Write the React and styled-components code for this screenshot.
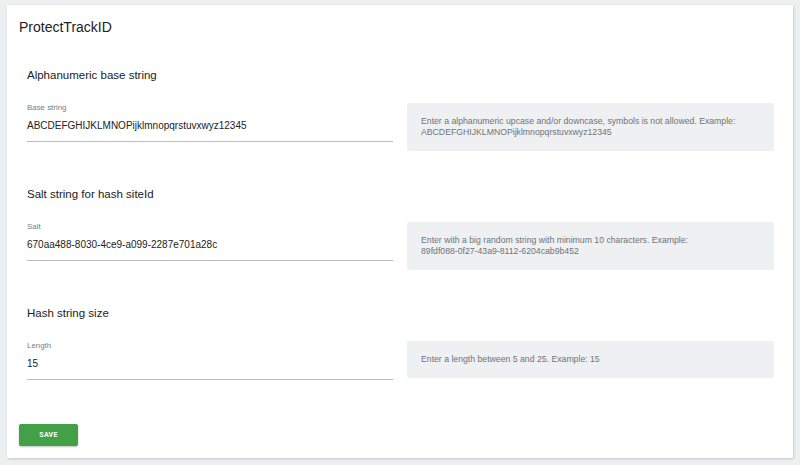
import React from "react";
import styled, { createGlobalStyle } from "styled-components";

const Global = createGlobalStyle`
  html, body { margin: 0; padding: 0; background: #eeeff1; }
  body { font-family: "Liberation Sans", Arial, sans-serif; }
  * { box-sizing: border-box; }
`;

const Page = styled.div`
  padding: 5px 7px 7px 7px;
`;

const Card = styled.div`
  width: 786px;
  height: 453px;
  background: #fff;
  box-shadow: 1px 1px 2px rgba(0, 0, 0, 0.12), 0 1px 3px rgba(0, 0, 0, 0.06);
  padding: 12px;
  display: flex;
  flex-direction: column;
`;

const Title = styled.h1`
  margin: 0;
  font-size: 14px;
  font-weight: 400;
  line-height: 20px;
  color: #222;
`;

const Sections = styled.div`
  padding: 0 8px;
  display: flex;
  flex-direction: column;
`;

const Section = styled.section`
  margin-top: ${(p) => (p.$first ? "30px" : "35px")};
`;

const SectionTitle = styled.h2`
  margin: 0 0 19px 0;
  font-size: 11.5px;
  font-weight: 400;
  line-height: 17px;
  color: #222;
`;

const Row = styled.div`
  display: grid;
  grid-template-columns: 366px 367px;
  column-gap: 14px;
  align-items: start;
`;

const Field = styled.label`
  display: flex;
  flex-direction: column;
  border-bottom: 1px solid #bcbcbc;
  padding-bottom: 7px;
`;

const FieldLabel = styled.span`
  font-size: 7.9px;
  line-height: 10px;
  color: #6f7d8f;
  margin-bottom: 5px;
`;

const FieldValue = styled.input`
  border: none;
  outline: none;
  padding: 0;
  margin: 0;
  font-family: inherit;
  font-size: 10px;
  line-height: 16px;
  height: 16px;
  color: #222;
  background: transparent;
  width: 100%;
`;

const Help = styled.div`
  background: #eff0f2;
  border-radius: 2px;
  padding: 13px 14px;
  font-size: 8.7px;
  line-height: 11px;
  color: #6e737b;
`;

const Footer = styled.div`
  margin-top: auto;
`;

const SaveButton = styled.button`
  width: 59px;
  height: 22px;
  border: none;
  border-radius: 2px;
  background: #43a047;
  color: #fff;
  font-family: "Roboto", "Liberation Sans", sans-serif;
  font-weight: 700;
  font-size: 7px;
  letter-spacing: 0.3px;
  text-transform: uppercase;
  box-shadow: 0 1px 2px rgba(0, 0, 0, 0.25);
  cursor: pointer;
`;

const fields = [
  {
    title: "Alphanumeric base string",
    label: "Base string",
    value: "ABCDEFGHIJKLMNOPijklmnopqrstuvxwyz12345",
    help: [
      "Enter a alphanumeric upcase and/or downcase, symbols is not allowed. Example:",
      "ABCDEFGHIJKLMNOPijklmnopqrstuvxwyz12345",
    ],
  },
  {
    title: "Salt string for hash siteId",
    label: "Salt",
    value: "670aa488-8030-4ce9-a099-2287e701a28c",
    help: [
      "Enter with a big random string with minimum 10 characters. Example:",
      "89fdf088-0f27-43a9-8112-6204cab9b452",
    ],
  },
  {
    title: "Hash string size",
    label: "Length",
    value: "15",
    help: ["Enter a length between 5 and 25. Example: 15"],
  },
];

export default function App() {
  return (
    <>
      <Global />
      <Page>
        <Card>
          <Title>ProtectTrackID</Title>
          <Sections>
            {fields.map((f, i) => (
              <Section key={f.label} $first={i === 0}>
                <SectionTitle>{f.title}</SectionTitle>
                <Row>
                  <Field>
                    <FieldLabel>{f.label}</FieldLabel>
                    <FieldValue defaultValue={f.value} />
                  </Field>
                  <Help>
                    {f.help.map((h, j) => (
                      <div key={j}>{h}</div>
                    ))}
                  </Help>
                </Row>
              </Section>
            ))}
          </Sections>
          <Footer>
            <SaveButton>Save</SaveButton>
          </Footer>
        </Card>
      </Page>
    </>
  );
}
